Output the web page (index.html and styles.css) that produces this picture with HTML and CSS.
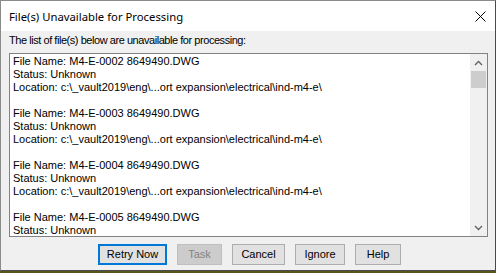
FILE: index.html
```html
<!DOCTYPE html>
<html>
<head>
<meta charset="utf-8">
<link rel="stylesheet" href="styles.css">
</head>
<body>
<div class="window">
  <div class="titlebar">
    <span class="title">File(s) Unavailable for Processing</span>
    <svg class="close" width="11" height="11" viewBox="0 0 11 11"><path d="M0.5 0.5 L10.5 10.5 M10.5 0.5 L0.5 10.5" stroke="#000" stroke-width="1" fill="none"/></svg>
  </div>
  <div class="body">
    <div class="label">The list of file(s) below are unavailable for processing:</div>
    <div class="listbox">
      <div class="list-content">
        <div class="line">File Name: M4-E-0002 8649490.DWG</div>
        <div class="line">Status: Unknown</div>
        <div class="line">Location: c:\_vault2019\eng\...ort expansion\electrical\ind-m4-e\</div>
        <div class="line">&nbsp;</div>
        <div class="line">File Name: M4-E-0003 8649490.DWG</div>
        <div class="line">Status: Unknown</div>
        <div class="line">Location: c:\_vault2019\eng\...ort expansion\electrical\ind-m4-e\</div>
        <div class="line">&nbsp;</div>
        <div class="line">File Name: M4-E-0004 8649490.DWG</div>
        <div class="line">Status: Unknown</div>
        <div class="line">Location: c:\_vault2019\eng\...ort expansion\electrical\ind-m4-e\</div>
        <div class="line">&nbsp;</div>
        <div class="line">File Name: M4-E-0005 8649490.DWG</div>
        <div class="line">Status: Unknown</div>
      </div>
      <div class="scrollbar">
        <div class="arrow">
          <svg width="9" height="6" viewBox="0 0 9 6"><path d="M1 5 L4.5 1.5 L8 5" stroke="#606060" stroke-width="1.3" fill="none"/></svg>
        </div>
        <div class="thumb"></div>
        <div class="track"></div>
        <div class="arrow">
          <svg width="9" height="6" viewBox="0 0 9 6"><path d="M1 1 L4.5 4.5 L8 1" stroke="#606060" stroke-width="1.3" fill="none"/></svg>
        </div>
      </div>
    </div>
    <div class="buttons">
      <div class="btn default w-retry">Retry Now</div>
      <div class="btn disabled w-task">Task</div>
      <div class="btn w-cancel">Cancel</div>
      <div class="btn w-ignore">Ignore</div>
      <div class="btn w-help">Help</div>
    </div>
  </div>
</div>
</body>
</html>
```
FILE: styles.css
```css
html, body {
  margin: 0;
  padding: 0;
}
body {
  background: #57561f;
  width: 496px;
  height: 273px;
  overflow: hidden;
}
.window {
  width: 496px;
  height: 271px;
  box-sizing: border-box;
  border: 1px solid #4a4a4a;
  border-left-color: #8a8a8a;
  border-top-color: #8a8a8a;
  display: flex;
  flex-direction: column;
  background: #f0f0f0;
}
.titlebar {
  height: 30px;
  background: #fff;
  display: flex;
  align-items: center;
  padding-left: 8px;
  padding-right: 9px;
  flex-shrink: 0;
}
.title {
  font-family: "Noto Sans", sans-serif;
  font-size: 11.3px;
  color: #000;
  flex: 1;
}
.close {
  display: block;
}
.body {
  flex: 1;
  padding: 0 7px 0 8px;
  display: flex;
  flex-direction: column;
}
.label {
  font-family: "Liberation Sans", Arial, sans-serif;
  font-size: 11px;
  letter-spacing: -0.45px;
  line-height: 16px;
  margin-top: 1px;
  color: #000;
  height: 16px;
  white-space: nowrap;
}
.listbox {
  margin-top: 5px;
  width: 479px;
  height: 184px;
  box-sizing: border-box;
  border: 1px solid #828282;
  background: #fff;
  display: flex;
  overflow: hidden;
  flex-shrink: 0;
}
.list-content {
  flex: 1;
  padding: 1px 0 0 3px;
  font-family: "Liberation Sans", Arial, sans-serif;
  font-size: 11px;
  line-height: 13px;
  color: #000;
  overflow: hidden;
  white-space: nowrap;
}
.scrollbar {
  width: 17px;
  background: #f0f0f0;
  display: flex;
  flex-direction: column;
}
.arrow {
  height: 17px;
  display: flex;
  align-items: center;
  justify-content: center;
}
.arrow svg { display: block; }
.thumb {
  height: 17px;
  margin: 0 1px;
  background: #cdcdcd;
}
.track { flex: 1; }
.buttons {
  display: flex;
  justify-content: center;
  gap: 10px;
  margin-top: 7px;
  padding-left: 2px;
}
.btn {
  height: 21px;
  box-sizing: border-box;
  border: 1px solid #adadad;
  background: #e1e1e1;
  font-family: "Liberation Sans", Arial, sans-serif;
  font-size: 11px;
  line-height: 13px;
  color: #000;
  display: flex;
  align-items: center;
  justify-content: center;
  white-space: nowrap;
}
.btn.default {
  border: 2px solid #0078d7;
}
.btn.disabled {
  background: #cccccc;
  border-color: #bfbfbf;
  color: #838383;
}
.w-retry { width: 69px; }
.w-task { width: 45px; }
.w-cancel { width: 53px; }
.w-ignore { width: 50px; }
.w-help { width: 46px; }
```
